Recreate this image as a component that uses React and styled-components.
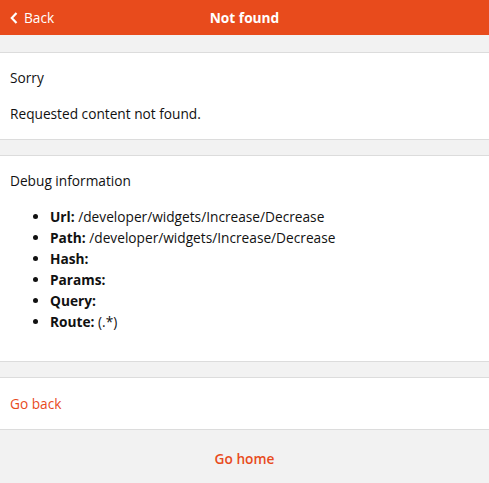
import React from 'react';
import styled, { createGlobalStyle } from 'styled-components';

const colors = {
	primary: '#e84b1c',
	band: '#f2f2f2',
	border: '#dcdcdc',
	text: '#111111'
};

const GlobalStyle = createGlobalStyle`
	html, body {
		margin: 0;
		padding: 0;
		background: ${colors.band};
	}
	body {
		font-family: 'Open Sans', 'Noto Sans', sans-serif;
		font-size: 13.7px;
		color: ${colors.text};
	}
`;

const Page = styled.div`
	display: flex;
	flex-direction: column;
	min-height: 483px;
	background: ${colors.band};
`;

const Navbar = styled.header`
	height: 35px;
	display: grid;
	grid-template-columns: 1fr auto 1fr;
	align-items: center;
	background: ${colors.primary};
	color: white;
`;

const BackLink = styled.a`
	display: flex;
	align-items: center;
	gap: 6px;
	padding-left: 10px;
	color: white;
`;

const Title = styled.div`
	font-weight: bold;
`;

const Block = styled.section`
	margin-top: 17px;
	padding: 0 10px;
	background: white;
	border-top: 1px solid ${colors.border};
	border-bottom: 1px solid ${colors.border};
	display: flow-root;
	& + & {
		margin-top: 15px;
	}
`;

const Paragraph = styled.p`
	margin: 14px 0;
	line-height: 22px;
`;

const List = styled.ul`
	margin: 14px 0 28px;
	padding-left: 40px;
	line-height: 21.1px;
`;

const Link = styled.a`
	display: block;
	padding: 15px 0;
	color: ${colors.primary};
	line-height: 21px;
`;

const HomeButton = styled.a`
	flex: 1;
	display: flex;
	justify-content: center;
	padding-top: 18px;
	line-height: 21px;
	color: ${colors.primary};
	font-weight: 600;
`;

const Chevron = () => (
	<svg width="8" height="12" viewBox="0 0 8 12">
		<path d="M6.5 1 L1.8 6 L6.5 11" fill="none" stroke="white" strokeWidth="2.2" />
	</svg>
);

const debug = [
	['Url', '/developer/widgets/Increase/Decrease'],
	['Path', '/developer/widgets/Increase/Decrease'],
	['Hash', ''],
	['Params', ''],
	['Query', ''],
	['Route', '(.*)']
];

const App = () => (
	<Page>
		<GlobalStyle />
		<Navbar>
			<BackLink>
				<Chevron />
				Back
			</BackLink>
			<Title>Not found</Title>
			<div />
		</Navbar>
		<Block>
			<Paragraph>Sorry</Paragraph>
			<Paragraph>Requested content not found.</Paragraph>
		</Block>
		<Block>
			<Paragraph>Debug information</Paragraph>
			<List>
				{debug.map(([label, value]) => (
					<li key={label}>
						<b>{label}:</b> {value}
					</li>
				))}
			</List>
		</Block>
		<Block>
			<Link>Go back</Link>
		</Block>
		<HomeButton>Go home</HomeButton>
	</Page>
);

export default App;
